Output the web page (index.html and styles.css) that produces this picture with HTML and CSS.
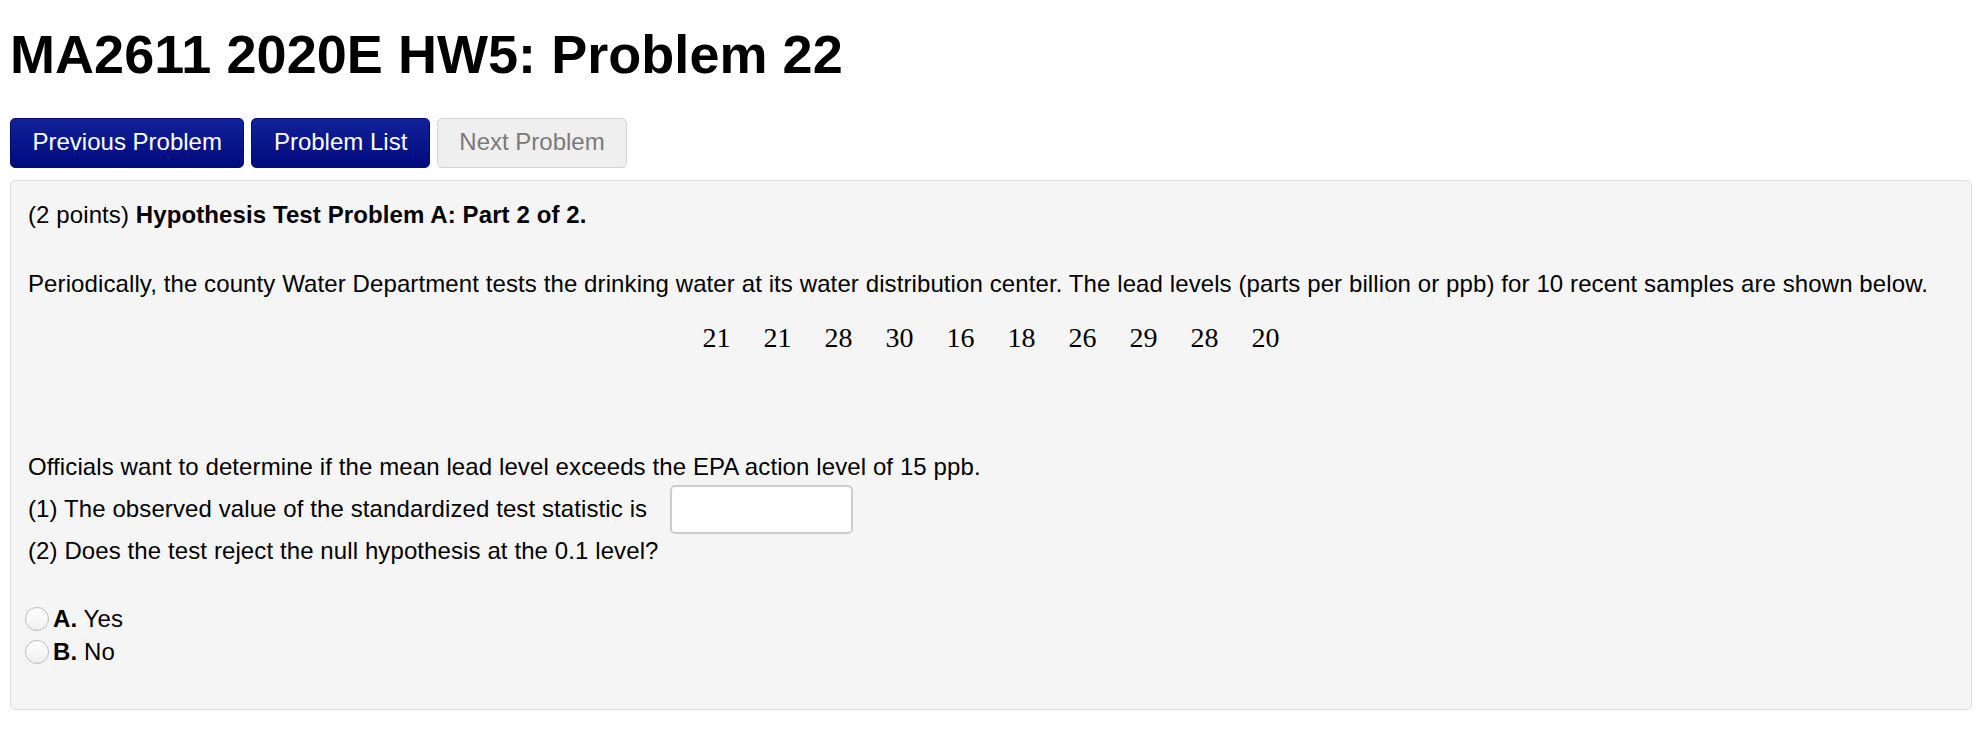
FILE: index.html
```html
<!DOCTYPE html>
<html lang="en">
<head>
<meta charset="utf-8">
<title>MA2611 2020E HW5: Problem 22</title>
<link rel="stylesheet" href="styles.css">
</head>
<body>
<div class="page">
  <h1 class="title">MA2611 2020E HW5: Problem 22</h1>
  <nav class="nav">
    <a class="btn btn-primary" href="#">Previous Problem</a>
    <a class="btn btn-primary" href="#">Problem List</a>
    <span class="btn btn-disabled">Next Problem</span>
  </nav>
  <div class="panel">
    <p class="line header-line">(2 points) <b>Hypothesis Test Problem A: Part 2 of 2.</b></p>
    <p class="line intro">Periodically, the county Water Department tests the drinking water at its water distribution center. The lead levels (parts per billion or ppb) for 10 recent samples are shown below.</p>
    <div class="data">
      <span>21</span><span>21</span><span>28</span><span>30</span><span>16</span><span>18</span><span>26</span><span>29</span><span>28</span><span>20</span>
    </div>
    <div class="questions">
      <div class="qline">Officials want to determine if the mean lead level exceeds the EPA action level of 15 ppb.</div>
      <div class="qline">(1) The observed value of the standardized test statistic is<input class="answer" type="text" aria-label="answer"></div>
      <div class="qline">(2) Does the test reject the null hypothesis at the 0.1 level?</div>
    </div>
    <div class="choices">
      <label class="choice"><input class="radio" type="radio" name="ans"><span><b>A.</b> Yes</span></label>
      <label class="choice"><input class="radio" type="radio" name="ans"><span><b>B.</b> No</span></label>
    </div>
  </div>
</div>
</body>
</html>
```

FILE: styles.css
```css
html, body {
  margin: 0;
  padding: 0;
  background: #ffffff;
}
body {
  font-family: "Liberation Sans", Arial, Helvetica, sans-serif;
  color: #000;
}
.page {
  padding: 0 16px 0 10px;
}
.title {
  margin: 24px 0 0 0;
  font-size: 54px;
  line-height: 60px;
  font-weight: bold;
  color: #000;
  letter-spacing: 0.05px;
}
.nav {
  display: flex;
  gap: 7px;
  margin-top: 34px;
}
.btn {
  display: block;
  height: 48px;
  line-height: 46px;
  padding: 0 21.5px;
  font-size: 24px;
  border-radius: 5px;
  text-decoration: none;
  border: 1px solid transparent;
}
.btn-primary {
  color: #fff;
  background: linear-gradient(#12229a, #000a7c);
  border-color: #001070;
}
.btn-disabled {
  color: #7a7a7a;
  background: #efefef;
  border-color: #d4d4d4;
}
.panel {
  margin-top: 12px;
  background: #f5f5f5;
  border: 1px solid #dddddd;
  border-radius: 5px;
  padding: 17px 17px 41px 17px;
  font-size: 24px;
  letter-spacing: 0.1px;
}
.line {
  margin: 0;
  line-height: 34px;
}
.intro {
  margin-top: 35px;
}
.data {
  margin-top: 20px;
  display: flex;
  justify-content: center;
  gap: 33px;
  font-family: "Liberation Serif", "Times New Roman", serif;
  font-size: 28px;
  line-height: 34px;
  letter-spacing: 0;
}
.questions {
  margin-top: 91px;
}
.qline {
  display: flex;
  align-items: center;
  height: 42px;
  line-height: 42px;
  white-space: nowrap;
}
.answer {
  box-sizing: border-box;
  width: 183px;
  height: 49px;
  margin: -4px 0 -4px 23px;
  border: 2px solid #cdcdcd;
  border-radius: 5px;
  background: #fff;
  font-size: 24px;
  padding: 0 8px;
}
.choices {
  margin-top: 30px;
}
.choice {
  display: flex;
  align-items: center;
  height: 33px;
  line-height: 33px;
}
.radio {
  appearance: none;
  -webkit-appearance: none;
  box-sizing: border-box;
  width: 24px;
  height: 24px;
  margin: 0 4px 0 -3px;
  border: 1px solid #bdbdbd;
  border-radius: 50%;
  background: linear-gradient(#ffffff, #f0f0f0);
}
```
